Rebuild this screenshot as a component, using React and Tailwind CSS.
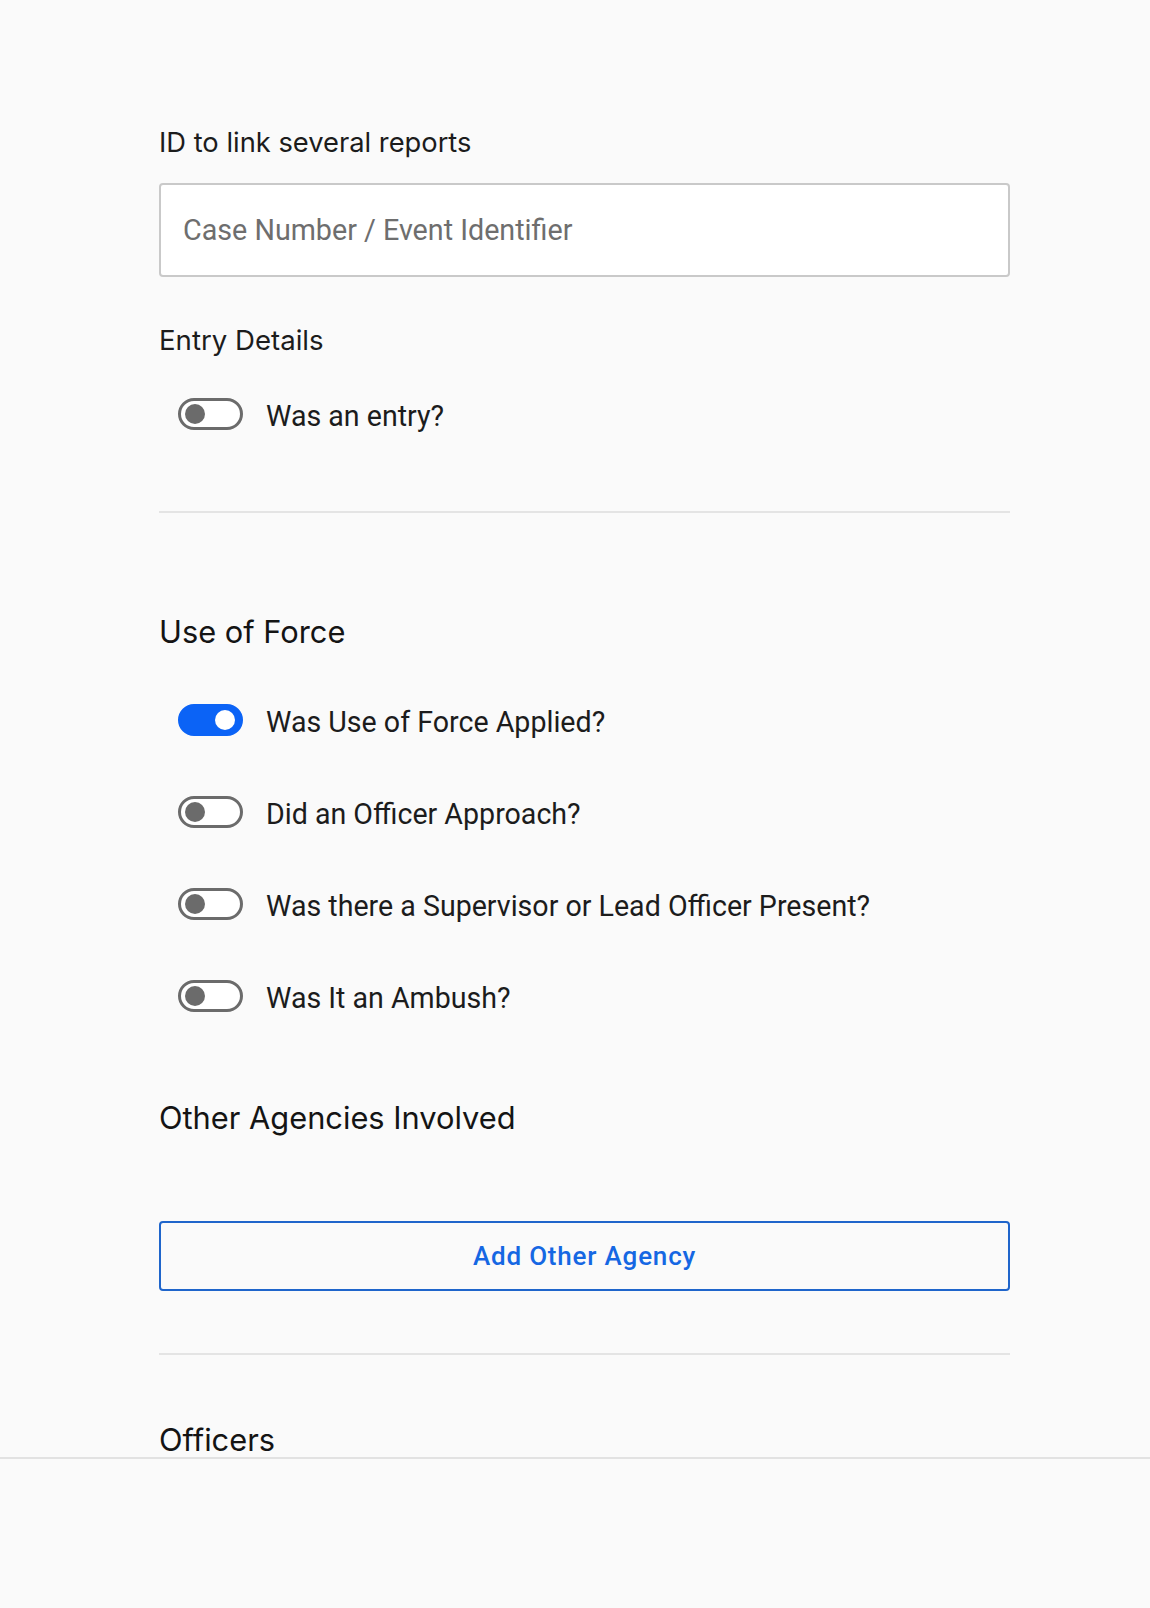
import React, { useState } from 'react';

const sans = { fontFamily: 'Inter, "Noto Sans", sans-serif' };

function Toggle({ on, onChange, label }) {
  return (
    <div className="flex items-center h-[32px] ml-[19px]">
      <button
        type="button"
        onClick={onChange}
        className={`relative w-[65px] h-[32px] rounded-full shrink-0 border-[3px] ${
          on ? 'bg-[#0b63f6] border-[#0b63f6]' : 'bg-white border-[#6b6b6b]'
        }`}
      >
        <span
          className={`absolute top-[3px] w-[20px] h-[20px] rounded-full ${
            on ? 'left-[34px] bg-white' : 'left-[4px] bg-[#6b6b6b]'
          }`}
        />
      </button>
      <span className="ml-[23px] pt-[4px] text-[28.6px] leading-[32px] text-[#1c1c1c] font-['Roboto',sans-serif]">
        {label}
      </span>
    </div>
  );
}

export default function App() {
  const [entry, setEntry] = useState(false);
  const [force, setForce] = useState({
    applied: true,
    approach: false,
    supervisor: false,
    ambush: false
  });

  const flip = key => setForce(prev => ({ ...prev, [key]: !prev[key] }));

  return (
    <div className="w-[1150px] h-[1608px] bg-[#fafafa] flex flex-col overflow-hidden" style={sans}>
      {/* Scrolling form area */}
      <div className="h-[1457px] overflow-hidden shrink-0">
        <div className="ml-[159px] w-[851px] pt-[126px] flex flex-col">
          <label className="text-[27.3px] leading-[34px] text-[#1c1c1c]">ID to link several reports</label>
          <input
            type="text"
            placeholder="Case Number / Event Identifier"
            className="mt-[23px] h-[94px] w-full bg-white border-2 border-[#c9c9c9] rounded-[4px] pl-[22px] text-[28.7px] font-['Roboto',sans-serif] text-[#1c1c1c] placeholder:text-[#6e6e6e] outline-none"
          />

          <div className="mt-[46px] text-[27.6px] leading-[34px] text-[#1c1c1c]">Entry Details</div>
          <div className="mt-[41px]">
            <Toggle on={entry} onChange={() => setEntry(v => !v)} label="Was an entry?" />
          </div>

          <div className="mt-[81px] h-[2px] bg-[#e4e4e4]" />

          {/* Use of Force */}
          <h2 className="mt-[100px] text-[30.8px] leading-[38px] text-[#141414]">Use of Force</h2>
          <div className="mt-[53px] flex flex-col gap-[60px]">
            <Toggle on={force.applied} onChange={() => flip('applied')} label="Was Use of Force Applied?" />
            <Toggle on={force.approach} onChange={() => flip('approach')} label="Did an Officer Approach?" />
            <Toggle on={force.supervisor} onChange={() => flip('supervisor')} label="Was there a Supervisor or Lead Officer Present?" />
            <Toggle on={force.ambush} onChange={() => flip('ambush')} label="Was It an Ambush?" />
          </div>

          {/* Other agencies */}
          <h2 className="mt-[87px] text-[30.8px] leading-[38px] text-[#141414]">Other Agencies Involved</h2>
          <button
            type="button"
            className="mt-[84px] h-[70px] w-full border-2 border-[#1f65cb] rounded-[4px] text-[26px] font-medium text-[#1567e3] tracking-[0.8px] font-['Roboto',sans-serif]"
          >
            Add Other Agency
          </button>

          <div className="mt-[62px] h-[2px] bg-[#e4e4e4]" />

          <h2 className="mt-[66px] text-[30.8px] leading-[38px] text-[#141414]">Officers</h2>
        </div>
      </div>

      {/* Footer strip */}
      <div className="flex-1 border-t-2 border-[#e2e2e2] bg-[#fafafa]" />
    </div>
  );
}
